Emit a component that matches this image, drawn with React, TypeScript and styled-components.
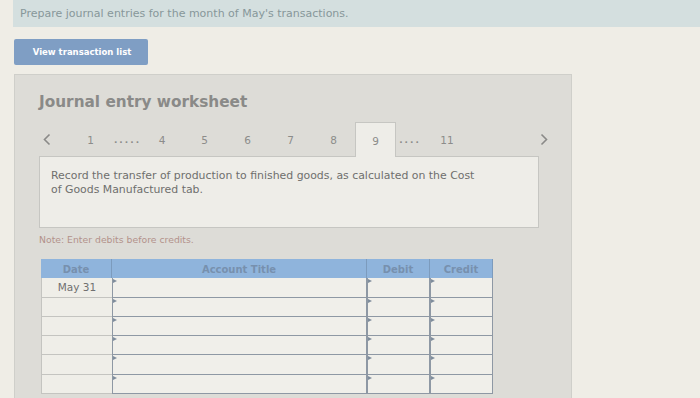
import React from 'react';
import styled, { createGlobalStyle } from 'styled-components';

const GlobalStyle = createGlobalStyle`
	html, body {
		margin: 0;
		padding: 0;
		background: #efede6;
		font-family: 'DejaVu Sans', Verdana, sans-serif;
		overflow: hidden;
	}
	* {
		box-sizing: border-box;
	}
`;

const Page = styled.div`
	width: 700px;
	height: 398px;
	display: flex;
	flex-direction: column;
	overflow: hidden;
`;

const Instruction = styled.div`
	margin-left: 13px;
	height: 27px;
	padding-left: 7px;
	background: #d4dfdf;
	color: #87979a;
	font-size: 11px;
	line-height: 28px;
`;

const ListButton = styled.button`
	margin: 12px 0 0 14px;
	width: 134px;
	height: 26px;
	border: 0;
	border-radius: 2px;
	background: #7f9ec4;
	color: #fff;
	font-family: 'DejaVu Sans', Verdana, sans-serif;
	font-size: 8.5px;
	font-weight: bold;
	padding: 0 0 0 2px;
	text-align: center;
	cursor: pointer;
`;

const Panel = styled.div`
	margin: 9px 0 0 14px;
	width: 558px;
	flex: 1;
	padding: 17px 0 0 24px;
	background: #dddcd7;
	border: 1px solid #cfcfca;
	border-bottom: 0;
`;

const Title = styled.h2`
	margin: 0;
	font-size: 15.3px;
	line-height: 20px;
	font-weight: bold;
	color: #8a8a88;
`;

const TabRow = styled.div`
	margin-top: 10px;
	height: 34px;
	width: 512px;
	display: flex;
	align-items: stretch;
`;

const Tab = styled.div<{ $w: number; $active?: boolean }>`
	width: ${(p) => p.$w}px;
	display: flex;
	align-items: center;
	justify-content: center;
	padding-top: 2px;
	font-size: 10.5px;
	color: #8c8c8a;
	background: ${(p) => (p.$active ? '#eeede8' : 'transparent')};
	border: ${(p) => (p.$active ? '1px solid #c6c6c2' : '0')};
	border-bottom: 0;
	position: relative;
	z-index: 1;
	margin-bottom: ${(p) => (p.$active ? '-1px' : '0')};
`;

const Dots = styled(Tab)`
	letter-spacing: 2px;
	padding-left: 2px;
	font-weight: bold;
	font-size: 9px;
`;

const Arrow = styled.div<{ $right?: boolean }>`
	width: 30px;
	display: flex;
	align-items: center;
	justify-content: ${(p) => (p.$right ? 'flex-end' : 'flex-start')};
	padding: 0 3px 0 4px;
	margin-left: ${(p) => (p.$right ? 'auto' : '0')};
`;

const TaskBox = styled.div`
	width: 500px;
	height: 72px;
	padding: 12px 50px 0 11px;
	background: #eeede8;
	border: 1px solid #c6c6c2;
	color: #6f6f6d;
	font-size: 10.9px;
	line-height: 14px;
`;

const Note = styled.p`
	margin: 6px 0 0;
	font-size: 9.3px;
	line-height: 12px;
	color: #b3928b;
`;

const Grid = styled.div`
	margin: 13px 0 0 2px;
	width: 452px;
	display: grid;
	grid-template-columns: 71px 255px 63px 63px;
	grid-auto-rows: 19.3px;
`;

const Head = styled.div`
	height: 20px;
	background: #8fb4dc;
	border-right: 1px solid #7c9bbd;
	color: #7790ae;
	font-size: 10px;
	font-weight: bold;
	display: flex;
	align-items: center;
	justify-content: center;
	&:last-child {
		border-right: 0;
	}
`;

const DateCell = styled.div`
	background: #efeee8;
	border: 1px solid #c4c4c0;
	border-top: 0;
	border-right: 0;
	color: #707070;
	font-size: 10.5px;
	display: flex;
	align-items: center;
	justify-content: center;
`;

const InputCell = styled.div`
	position: relative;
	background: #f0efea;
	border: 1.5px solid #8e98a4;
	border-top-width: 0;
	&::before {
		content: '';
		position: absolute;
		left: 0;
		top: 1px;
		border-left: 4px solid #7f8d9c;
		border-top: 2.5px solid transparent;
		border-bottom: 2.5px solid transparent;
	}
`;

const Chevron: React.FC<{ right?: boolean }> = ({ right }) => (
	<svg width='8' height='13' viewBox='0 0 8 13'>
		<polyline
			points={right ? '1.5,1.5 6.5,6.5 1.5,11.5' : '6.5,1.5 1.5,6.5 6.5,11.5'}
			fill='none'
			stroke='#8a8a88'
			strokeWidth='1.6'
		/>
	</svg>
);

const rows = ['May 31', '', '', '', '', ''];

const App: React.FC = () => {
	return (
		<Page>
			<GlobalStyle />
			<Instruction>Prepare journal entries for the month of May's transactions.</Instruction>
			<ListButton>View transaction list</ListButton>
			<Panel>
				<Title>Journal entry worksheet</Title>
				<TabRow>
					<Arrow>
						<Chevron />
					</Arrow>
					<Tab $w={43}>1</Tab>
					<Dots $w={29}>.....</Dots>
					<Tab $w={42}>4</Tab>
					<Tab $w={43}>5</Tab>
					<Tab $w={43}>6</Tab>
					<Tab $w={43}>7</Tab>
					<Tab $w={43}>8</Tab>
					<Tab $w={41} $active>
						9
					</Tab>
					<Dots $w={26}>....</Dots>
					<Tab $w={50}>11</Tab>
					<Arrow $right>
						<Chevron right />
					</Arrow>
				</TabRow>
				<TaskBox>
					Record the transfer of production to finished goods, as calculated on the Cost of Goods
					Manufactured tab.
				</TaskBox>
				<Note>Note: Enter debits before credits.</Note>
				<Grid>
					<Head>Date</Head>
					<Head>Account Title</Head>
					<Head>Debit</Head>
					<Head>Credit</Head>
					{rows.map((d, i) => (
						<React.Fragment key={i}>
							<DateCell>{d}</DateCell>
							<InputCell />
							<InputCell />
							<InputCell />
						</React.Fragment>
					))}
				</Grid>
			</Panel>
		</Page>
	);
};

export default App;
